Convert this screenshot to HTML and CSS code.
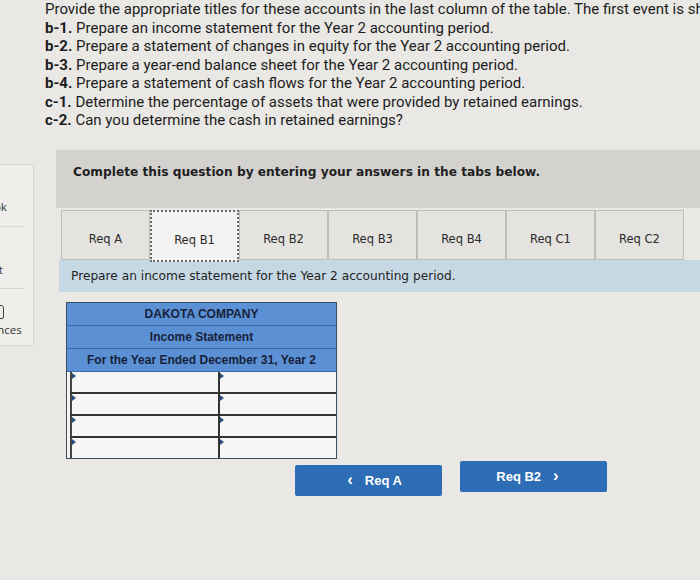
FILE: index.html
```html
<!DOCTYPE html>
<html>
<head>
<meta charset="utf-8">
<link rel="stylesheet" href="styles.css">
</head>
<body>
<div class="page">
  <div class="intro">
    <p>Provide the appropriate titles for these accounts in the last column of the table. The first event is shown as an example.</p>
    <p><b>b-1.</b> Prepare an income statement for the Year 2 accounting period.</p>
    <p><b>b-2.</b> Prepare a statement of changes in equity for the Year 2 accounting period.</p>
    <p><b>b-3.</b> Prepare a year-end balance sheet for the Year 2 accounting period.</p>
    <p><b>b-4.</b> Prepare a statement of cash flows for the Year 2 accounting period.</p>
    <p><b>c-1.</b> Determine the percentage of assets that were provided by retained earnings.</p>
    <p><b>c-2.</b> Can you determine the cash in retained earnings?</p>
  </div>

  <div class="lower">
    <div class="sidebar">
      <div class="side-col">
        <div class="side-item first"><span>eBook</span></div>
        <div class="side-item second"><span class="side-icon-print"></span><span>Print</span></div>
        <div class="side-item third"><span class="side-icon-ref"></span><span>References</span></div>
      </div>
    </div>

    <div class="main">
      <div class="banner">Complete this question by entering your answers in the tabs below.</div>

      <div class="tabs">
        <div class="tab">Req A</div>
        <div class="tab active">Req B1</div>
        <div class="tab">Req B2</div>
        <div class="tab">Req B3</div>
        <div class="tab">Req B4</div>
        <div class="tab">Req C1</div>
        <div class="tab">Req C2</div>
      </div>

      <div class="instruction">Prepare an income statement for the Year 2 accounting period.</div>

      <div class="statement">
        <div class="head">DAKOTA COMPANY</div>
        <div class="head">Income Statement</div>
        <div class="head">For the Year Ended December 31, Year 2</div>
        <div class="row"><div class="cell wide"></div><div class="cell"></div></div>
        <div class="row"><div class="cell wide"></div><div class="cell"></div></div>
        <div class="row"><div class="cell wide"></div><div class="cell"></div></div>
        <div class="row last"><div class="cell wide"></div><div class="cell"></div></div>
      </div>

      <div class="nav">
        <div class="btn prev"><span class="chev">&lsaquo;</span> Req A</div>
        <div class="btn next">Req B2 <span class="chev">&rsaquo;</span></div>
      </div>
    </div>
  </div>
</div>
</body>
</html>
```

FILE: styles.css
```css
html, body {
  margin: 0;
  padding: 0;
  width: 700px;
  height: 580px;
  overflow: hidden;
  background: #e9e8e5;
}

.page {
  width: 700px;
  height: 580px;
  overflow: hidden;
}

.intro {
  margin: 0 0 0 45px;
  font-family: Roboto, "Liberation Sans", sans-serif;
  font-size: 15px;
  line-height: 18.5px;
  color: #1c1c1c;
  white-space: nowrap;
}

.intro p {
  margin: 0;
}

.intro b {
  font-weight: 700;
}

.lower {
  display: flex;
  margin-top: 20px;
}

.sidebar {
  width: 33px;
  flex: none;
  margin-top: 14px;
  height: 180px;
  background: #efeeeb;
  border: 1px solid #d6d5d2;
  border-left: none;
  border-radius: 0 4px 4px 0;
  overflow: hidden;
  font-family: "Open Sans", "DejaVu Sans", sans-serif;
  font-size: 11.5px;
  color: #333;
}

.side-col {
  width: 66px;
  margin-left: -41px;
  display: flex;
  flex-direction: column;
}

.side-item {
  display: flex;
  flex-direction: column;
  align-items: center;
  justify-content: flex-end;
  border-bottom: 1px solid #d8d7d4;
  box-sizing: border-box;
  white-space: nowrap;
}

.side-item.first {
  height: 62px;
  padding-bottom: 12px;
  padding-right: 4px;
}

.side-item.second {
  height: 62px;
  padding-bottom: 11px;
  padding-right: 4px;
}

.side-item.third {
  border-bottom: none;
  height: 56px;
  padding-bottom: 8px;
}

.side-icon-print {
  width: 14px;
  height: 9px;
  border: 1px solid #444;
  border-radius: 1px;
  margin-bottom: 7px;
  margin-right: 2px;
}

.side-icon-ref {
  width: 12px;
  height: 12px;
  border: 1.5px solid #444;
  border-radius: 1px 3px 2px 1px;
  margin-bottom: 3px;
  margin-left: 10px;
}

.main {
  flex: 1;
  margin-left: 22px;
  min-width: 0;
}

.banner {
  height: 58px;
  box-sizing: border-box;
  background: #d3d2cf;
  padding: 15px 0 0 17px;
  font-family: "DejaVu Sans", Verdana, sans-serif;
  font-weight: bold;
  font-size: 12.2px;
  color: #1f1f1f;
  white-space: nowrap;
}

.tabs {
  display: flex;
  margin: 2px 0 0 5px;
  position: relative;
  z-index: 1;
}

.tab {
  width: 89px;
  height: 50px;
  box-sizing: border-box;
  flex: none;
  border: 1px solid #bdbcb9;
  background: #e4e3e0;
  display: flex;
  align-items: center;
  justify-content: center;
  font-family: "DejaVu Sans", Verdana, sans-serif;
  font-size: 11.5px;
  color: #2a2a2a;
  padding-top: 9px;
}

.tab.active {
  background: #f3f3f1;
  border: 2px dotted #6b6b6b;
  height: 52px;
  margin-bottom: -2px;
}

.instruction {
  height: 32px;
  box-sizing: border-box;
  background: #c6d8e4;
  margin-left: 3px;
  padding: 9px 0 0 12px;
  font-family: "DejaVu Sans", Verdana, sans-serif;
  font-size: 12.2px;
  color: #1f1f1f;
  white-space: nowrap;
}

.statement {
  margin: 10px 0 0 10px;
  width: 269px;
  border: 1px solid #3c4e66;
  background: #f3f3f1;
}

.head {
  height: 23px;
  box-sizing: border-box;
  background: #5c90d5;
  border-bottom: 1px solid #3f6ca8;
  display: flex;
  align-items: center;
  justify-content: center;
  font-family: "Liberation Sans", Arial, sans-serif;
  font-weight: bold;
  font-size: 12px;
  color: #16223a;
}

.row {
  display: flex;
  height: 22px;
  border-bottom: 2px solid #333;
  box-sizing: border-box;
  margin-left: 3px;
}

.row.last {
  border-bottom: none;
  height: 20px;
}

.cell {
  flex: 1;
  background: #f6f6f4;
  border-left: 2px solid #333;
  position: relative;
}

.cell.wide {
  flex: none;
  width: 146px;
  border-left: 2px solid #444;
}

.cell::before {
  content: "";
  position: absolute;
  left: 0;
  top: 1px;
  border-left: 4px solid #2b4f80;
  border-top: 3px solid transparent;
  border-bottom: 3px solid transparent;
}

.nav {
  display: flex;
  gap: 18px;
  margin: 6px 0 0 239px;
}

.btn {
  width: 147px;
  height: 31px;
  box-sizing: border-box;
  background: #2c6db6;
  border-radius: 2px;
  color: #ffffff;
  font-family: "Liberation Sans", Arial, sans-serif;
  font-weight: bold;
  font-size: 13px;
  display: flex;
  align-items: center;
  justify-content: center;
}

.btn.next {
  margin-top: -4px;
}

.chev {
  font-size: 17px;
  margin: 0 12px;
  line-height: 1;
  position: relative;
  top: -1px;
}
```
